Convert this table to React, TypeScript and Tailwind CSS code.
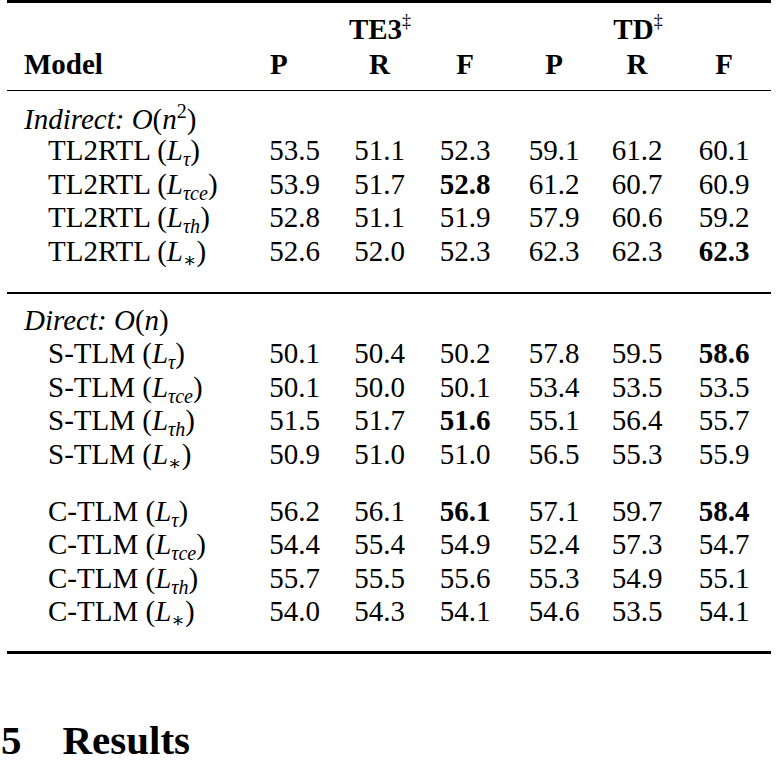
import React from "react";

const COLS = "grid grid-cols-[245px_85px_85px_86px_92px_74px_100px] w-[767px]";

type RowData = { name: string; sub: string; vals: string[]; bold?: number[] };

const sec1: RowData[] = [
  { name: "TL2RTL", sub: "τ", vals: ["53.5", "51.1", "52.3", "59.1", "61.2", "60.1"] },
  { name: "TL2RTL", sub: "τce", vals: ["53.9", "51.7", "52.8", "61.2", "60.7", "60.9"], bold: [2] },
  { name: "TL2RTL", sub: "τh", vals: ["52.8", "51.1", "51.9", "57.9", "60.6", "59.2"] },
  { name: "TL2RTL", sub: "∗", vals: ["52.6", "52.0", "52.3", "62.3", "62.3", "62.3"], bold: [5] },
];

const sec2a: RowData[] = [
  { name: "S-TLM", sub: "τ", vals: ["50.1", "50.4", "50.2", "57.8", "59.5", "58.6"], bold: [5] },
  { name: "S-TLM", sub: "τce", vals: ["50.1", "50.0", "50.1", "53.4", "53.5", "53.5"] },
  { name: "S-TLM", sub: "τh", vals: ["51.5", "51.7", "51.6", "55.1", "56.4", "55.7"], bold: [2] },
  { name: "S-TLM", sub: "∗", vals: ["50.9", "51.0", "51.0", "56.5", "55.3", "55.9"] },
];

const sec2b: RowData[] = [
  { name: "C-TLM", sub: "τ", vals: ["56.2", "56.1", "56.1", "57.1", "59.7", "58.4"], bold: [2, 5] },
  { name: "C-TLM", sub: "τce", vals: ["54.4", "55.4", "54.9", "52.4", "57.3", "54.7"] },
  { name: "C-TLM", sub: "τh", vals: ["55.7", "55.5", "55.6", "55.3", "54.9", "55.1"] },
  { name: "C-TLM", sub: "∗", vals: ["54.0", "54.3", "54.1", "54.6", "53.5", "54.1"] },
];

function Sub({ children }: { children: React.ReactNode }) {
  return (
    <span className="text-[20px] italic align-[-6px] leading-none">
      {children}
    </span>
  );
}

function Row({ r }: { r: RowData }) {
  return (
    <>
      <div className="h-[33.5px] leading-[33.5px] pl-[41px] whitespace-nowrap">
        {r.name} (<span className="italic">L</span>
        <Sub>{r.sub}</Sub>)
      </div>
      {r.vals.map((v, i) => (
        <div
          key={i}
          className={
            "h-[33.5px] leading-[33.5px] text-center" +
            (r.bold && r.bold.includes(i) ? " font-bold" : "")
          }
        >
          {v}
        </div>
      ))}
    </>
  );
}

export default function App() {
  return (
    <div className="w-[776px] h-[763px] bg-white text-black overflow-hidden font-[family-name:'Liberation_Serif','DejaVu_Serif',serif] text-[29px]">
      <div className="ml-[7px] w-[764px]">
        <div className="h-[2.5px] bg-black" />
        {/* header */}
        <div className={COLS + " font-bold pt-[9px]"}>
          <div className="h-[36px] leading-[33.5px]" />
          <div className="col-span-3 h-[36px] leading-[33.5px] text-center whitespace-nowrap">
            TE3<span className="text-[18px] align-[12px] leading-none font-normal">‡</span>
          </div>
          <div className="col-span-3 h-[36px] leading-[33.5px] text-center pr-[6px] whitespace-nowrap">
            TD<span className="text-[18px] align-[12px] leading-none font-normal">‡</span>
          </div>
          <div className="h-[33.5px] leading-[33.5px] pl-[17px]">Model</div>
          <div className="h-[33.5px] leading-[33.5px] pl-[18px] text-left">P</div>
          <div className="h-[33.5px] leading-[33.5px] text-center">R</div>
          <div className="h-[33.5px] leading-[33.5px] text-center">F</div>
          <div className="h-[33.5px] leading-[33.5px] text-center">P</div>
          <div className="h-[33.5px] leading-[33.5px] text-center">R</div>
          <div className="h-[33.5px] leading-[33.5px] text-center">F</div>
        </div>
        <div className="h-[1.5px] bg-black mt-[8.5px]" />
        {/* section 1 */}
        <div className={COLS + " pt-[9.5px] pb-[24px]"}>
          <div className="col-span-7 h-[33.5px] leading-[33.5px] pl-[17px] whitespace-nowrap">
            <span className="italic">Indirect:</span> <span className="italic">O</span>(
            <span className="italic">n</span>
            <span className="text-[20px] align-[11px] leading-none">2</span>)
          </div>
          {sec1.map((r, i) => (
            <Row key={i} r={r} />
          ))}
        </div>
        <div className="h-[1.5px] bg-black" />
        {/* section 2 */}
        <div className={COLS + " pt-[10px]"}>
          <div className="col-span-7 h-[33.5px] leading-[33.5px] pl-[17px] whitespace-nowrap">
            <span className="italic">Direct:</span> <span className="italic">O</span>(
            <span className="italic">n</span>)
          </div>
          {sec2a.map((r, i) => (
            <Row key={i} r={r} />
          ))}
        </div>
        <div className={COLS + " pt-[23.5px] pb-[22.5px]"}>
          {sec2b.map((r, i) => (
            <Row key={i} r={r} />
          ))}
        </div>
        <div className="h-[2.5px] bg-black" />
      </div>
      <div className="mt-[68px] h-[36px] leading-[36px] text-[41px] font-bold flex whitespace-nowrap">
        <span className="ml-[1px]">5</span>
        <span className="ml-[41px]">Results</span>
      </div>
    </div>
  );
}
